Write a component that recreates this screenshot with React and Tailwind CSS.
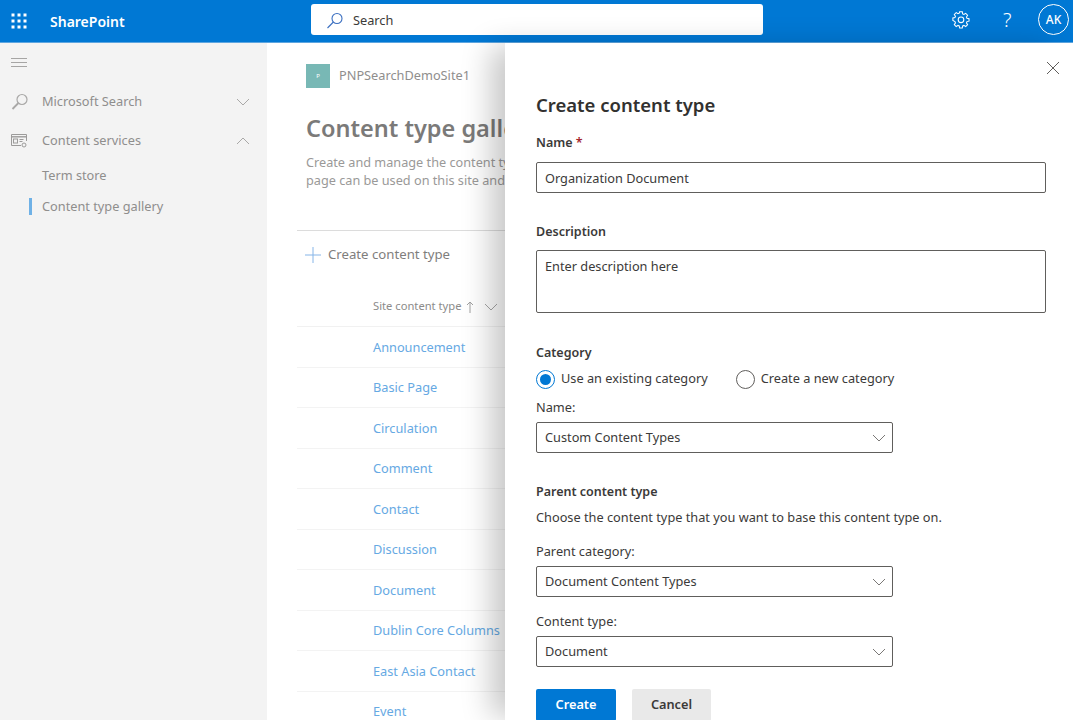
import React from "react";

const F = "[font-family:'Noto_Sans','Open_Sans',sans-serif]";

function Chevron({ up, className = "" }) {
  return (
    <svg width="14" height="8" viewBox="0 0 14 8" fill="none" stroke="currentColor" strokeWidth="1" className={className}>
      <path d={up ? "M1 7 L7 1 L13 7" : "M1 1 L7 7 L13 1"} />
    </svg>
  );
}

function Waffle() {
  const pts = [];
  for (let y = 0; y < 3; y++) for (let x = 0; x < 3; x++) pts.push([x * 6 + 0.5, y * 6 + 0.5]);
  return (
    <svg width="16" height="16" viewBox="0 0 16 16" fill="#fff">
      {pts.map(([x, y], i) => <rect key={i} x={x} y={y} width="3" height="3" />)}
    </svg>
  );
}

function Gear() {
  return (
    <svg width="18" height="18" viewBox="0 0 18 18" fill="none" stroke="#fff" strokeWidth="1.1">
      <path d="M7.6 1.5h2.8l.4 2.2 1.3.6 1.9-1.2 2 2-1.2 1.9.5 1.3 2.2.4v2.6l-2.2.5-.5 1.3 1.2 1.9-2 2-1.9-1.2-1.3.5-.4 2.2H7.6l-.4-2.2-1.3-.5-1.9 1.2-2-2 1.2-1.9-.5-1.3L.5 10.5V7.9l2.2-.4.5-1.3L2 4.3l2-2 1.9 1.2 1.3-.6z" transform="translate(0.4 -0.6) scale(0.95)" />
      <circle cx="9" cy="8.8" r="2.8" />
    </svg>
  );
}

function Field({ children, className = "" }) {
  return (
    <div className={`border border-[#605e5c] rounded-[2px] text-[12.75px] text-[#3b3a39] flex items-center ${className}`}>
      {children}
    </div>
  );
}

function Select({ value }) {
  return (
    <Field className="w-[357px] h-[31px] pl-2 pr-[6px] justify-between">
      <span>{value}</span>
      <Chevron className="text-[#7a7876]" />
    </Field>
  );
}

const rows = ["Announcement", "Basic Page", "Circulation", "Comment", "Contact", "Discussion", "Document", "Dublin Core Columns", "East Asia Contact", "Event"];

export default function App() {
  return (
    <div className={`relative w-[1073px] h-[720px] overflow-hidden bg-white ${F}`}>
      <header className="h-[43px] bg-[#0078d4] flex items-center border-b border-[#5ea6e0]">
        <div className="w-[50px] pl-[11px] flex items-center"><Waffle /></div>
        <div className="w-[261px] text-white text-[14px] font-semibold">SharePoint</div>
        <div className="w-[452px] h-[31px] mb-[3px] pt-[2px] bg-white rounded-[3px] flex items-center pl-[15px] gap-[9px] text-[12.75px] text-[#3b3a39]">
          <svg width="18" height="18" viewBox="0 0 18 18" fill="none" stroke="#3b6fc0" strokeWidth="1.1">
            <circle cx="11" cy="6.5" r="5" />
            <path d="M7.4 10 L1.5 16" />
          </svg>
          <span>Search</span>
        </div>
        <div className="ml-auto flex items-center pr-[4px] mb-[3px]">
          <Gear />
          <span className="ml-[33px] w-[10px] text-white text-[20px] font-light leading-none">?</span>
          <div className="ml-[25px] w-[31px] h-[31px] rounded-full border border-white text-white text-[12px] font-medium flex items-center justify-center">AK</div>
        </div>
      </header>

      <div className="flex h-[677px]">
        <aside className="w-[267px] bg-[#f3f3f3] text-[#8f8e8d] text-[12.75px] shrink-0">
          <div className="h-[40px] pl-[11px] pt-[15px]">
            <svg width="17" height="10" viewBox="0 0 17 10" stroke="#a6a5a4" strokeWidth="1"><path d="M0 .5h16M0 4.5h16M0 8.5h16" /></svg>
          </div>
          <div className="h-[38px] flex items-center pl-[11px] pr-[17px]">
            <svg width="18" height="18" viewBox="0 0 18 18" fill="none" stroke="#a9a8a7" strokeWidth="1.2" className="mr-[13px]">
              <circle cx="11" cy="6.5" r="5" />
              <path d="M7.4 10 L1.5 16" strokeWidth="1.8" />
            </svg>
            <span className="flex-1">Microsoft Search</span>
            <Chevron className="text-[#a9a8a7]" />
          </div>
          <div className="h-[38px] flex items-center pl-[11px] pr-[17px] mt-[1px]">
            <svg width="17" height="16" viewBox="0 0 17 16" fill="none" stroke="#9c9b9a" strokeWidth="1" className="mr-[14px]">
              <path d="M10 12.5H.5V1.5h15V8" />
              <path d="M.5 3.8h15" strokeWidth="1.4" />
              <rect x="2.5" y="6" width="4" height="4" />
              <path d="M8.5 6.5h4M8.5 8.5h3" />
              <circle cx="13" cy="12" r="2" />
            </svg>
            <span className="flex-1">Content services</span>
            <Chevron up className="text-[#a9a8a7]" />
          </div>
          <div className="h-[31px] flex items-center pl-[42px]">Term store</div>
          <div className="h-[31px] flex items-center relative pl-[42px]">
            <span className="absolute left-[29px] top-[7px] w-[3px] h-[17px] bg-[#6fb1e6]" />
            Content type gallery
          </div>
        </aside>

        <main className="flex-1 min-w-0 overflow-hidden text-[#7c7b7a] pl-[30px]">
          <div className="pl-[9px] pt-[21px] flex items-center gap-[9px]">
            <div className="w-[24px] h-[24px] bg-[#78b8b5] text-white text-[6px] flex items-center justify-center">P</div>
            <span className="text-[12.75px] text-[#8f8e8d]">PNPSearchDemoSite1</span>
          </div>
          <h1 className="pl-[9px] mt-[24px] text-[23.5px] leading-[32px] font-semibold text-[#7b7a79] whitespace-nowrap">Content type gallery</h1>
          <p className="pl-[9px] mt-[9px] text-[12.7px] leading-[18px] text-[#9a9998] whitespace-nowrap">Create and manage the content types<br />page can be used on this site and</p>
          <div className="mt-[41px] border-t border-[#dcdcdc] h-[49px] flex items-center pl-[8px] text-[13.2px] text-[#7f7e7d]">
            <svg width="16" height="16" viewBox="0 0 16 16" stroke="#86b5e8" strokeWidth="1" className="mr-[7px]"><path d="M8 0v16M0 8h16" /></svg>
            Create content type
          </div>
          <div className="h-[48px] pt-[8px] flex items-center pl-[76px] text-[11.2px] text-[#8c8b8a] border-b border-[#f1f1f1]">
            <span>Site content type</span>
            <svg width="8" height="12" viewBox="0 0 8 12" fill="none" stroke="#a0a0a0" strokeWidth="1" className="ml-[5px]"><path d="M4 12V1M1 4l3-3 3 3" /></svg>
            <Chevron className="ml-[10px] text-[#a6a6a6]" />
          </div>
          {rows.map((r) => (
            <div key={r} className="h-[40.5px] pt-[1px] flex items-center pl-[76px] text-[12.75px] text-[#66a9e3] border-b border-[#f3f3f3] whitespace-nowrap">{r}</div>
          ))}
        </main>
      </div>

      <section className="absolute top-[43px] left-[505px] right-0 h-[677px] bg-white shadow-[-18px_0_28px_-4px_rgba(0,0,0,0.22)] pl-[31px] pr-[27px] text-[#3b3a39] text-[12.75px]">
        <svg width="12" height="12" viewBox="0 0 12 12" stroke="#605e5c" strokeWidth="1" className="absolute right-[14px] top-[19px]"><path d="M0 0l12 12M12 0L0 12" /></svg>
        <h2 className="pt-[49px] text-[18.5px] leading-[26px] font-semibold text-[#323130]">Create content type</h2>
        <div className="mt-[16px] leading-[18px] font-semibold text-[12.5px]">Name <span className="text-[#a4262c]">*</span></div>
        <Field className="mt-[10px] h-[31px] px-2 pt-[3px]">Organization Document</Field>
        <div className="mt-[30px] leading-[18px] font-semibold text-[12.5px]">Description</div>
        <Field className="mt-[9px] h-[63px] px-2 pt-[6px] !items-start">Enter description here</Field>
        <div className="mt-[31px] leading-[18px] font-semibold text-[12.5px]">Category</div>
        <div className="mt-[7px] h-[20px] flex items-center">
          <span className="w-[19px] h-[19px] rounded-full border border-[#0078d4] flex items-center justify-center mr-[6px]">
            <span className="w-[11px] h-[11px] rounded-full bg-[#0078d4]" />
          </span>
          <span>Use an existing category</span>
          <span className="ml-[28px] w-[19px] h-[19px] rounded-full border border-[#605e5c] mr-[6px]" />
          <span>Create a new category</span>
        </div>
        <div className="mt-[9px] leading-[18px]">Name:</div>
        <div className="mt-[6px]"><Select value="Custom Content Types" /></div>
        <div className="mt-[30px] leading-[18px] font-semibold text-[12.5px]">Parent content type</div>
        <div className="mt-[7px] leading-[18px]">Choose the content type that you want to base this content type on.</div>
        <div className="mt-[16px] leading-[18px]">Parent category:</div>
        <div className="mt-[6px]"><Select value="Document Content Types" /></div>
        <div className="mt-[15px] leading-[18px]">Content type:</div>
        <div className="mt-[6px]"><Select value="Document" /></div>
        <div className="mt-[22px] flex gap-[16px]">
          <button className="w-[80px] h-[32px] rounded-[2px] bg-[#0078d4] text-white font-semibold">Create</button>
          <button className="w-[79px] h-[32px] rounded-[2px] bg-[#e9e9e9] text-[#3b3a39] font-semibold">Cancel</button>
        </div>
      </section>
    </div>
  );
}
